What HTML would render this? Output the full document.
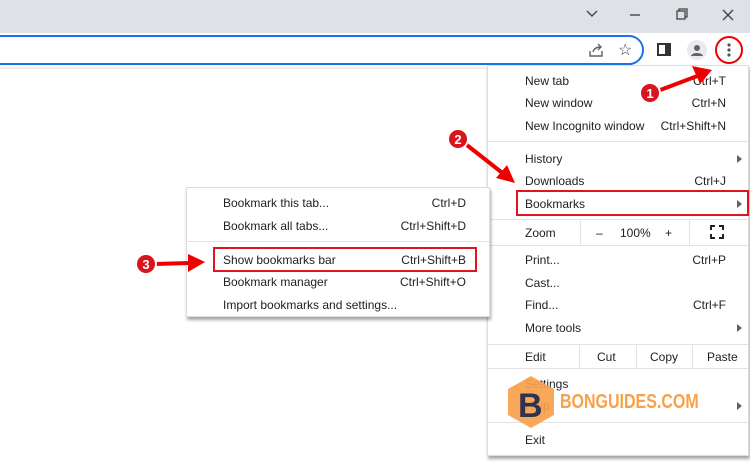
<!DOCTYPE html>
<html><head><style>
*{margin:0;padding:0;box-sizing:border-box}
body{width:750px;height:466px;position:relative;overflow:hidden;background:#fff;font-family:"Liberation Sans",sans-serif;font-size:12px;color:#202124}
.a{position:absolute;white-space:nowrap}
.r{position:absolute;white-space:nowrap;text-align:right}
.sep{position:absolute;height:1px;background:#e3e3e3}
.tri{position:absolute;width:0;height:0;border-top:4px solid transparent;border-bottom:4px solid transparent;border-left:5px solid #5f6368}
</style></head><body>
<div class="a" style="left:0;top:0;width:750px;height:33px;background:#dee1e6"></div>
<svg class="a" style="left:580px;top:6px" width="160" height="18" viewBox="0 0 160 18"><path d="M7 5l5 5 5-5" stroke="#444" stroke-width="1.4" fill="none"/><path d="M50 9h10" stroke="#444" stroke-width="1.4"/><rect x="97" y="5" width="8" height="8" stroke="#444" stroke-width="1.3" fill="none"/><path d="M99 5V3h8v8h-2" stroke="#444" stroke-width="1.3" fill="none"/><path d="M143 4l10 10M153 4l-10 10" stroke="#444" stroke-width="1.4"/></svg>
<div class="a" style="left:-20px;top:35px;width:664px;height:30px;border:2px solid #1a73e8;border-radius:15px;background:#fff"></div>
<div class="a" style="left:0;top:67px;width:487px;height:2px;background:#ececec"></div>
<svg class="a" style="left:587px;top:42px" width="20" height="16" viewBox="0 0 20 16"><path d="M3 9v5h12V9" stroke="#5f6368" stroke-width="1.4" fill="none"/><path d="M6 10c1-4 4-5 8-5M11 2l3 3-3 3" stroke="#5f6368" stroke-width="1.4" fill="none"/></svg>
<div class="a" style="left:618px;top:40px;font-size:16px;color:#444">☆</div>
<div class="a" style="left:657px;top:43px;width:14px;height:13px;border:2px solid #333;border-right:6px solid #333"></div>
<div class="a" style="left:687px;top:40px;width:20px;height:20px;border-radius:50%;background:#e8eaed"></div>
<svg class="a" style="left:687px;top:40px" width="20" height="20"><circle cx="10" cy="8" r="3" fill="#5f6368"/><path d="M4 16c1-4 11-4 12 0z" fill="#5f6368"/></svg>
<div class="a" style="left:715px;top:36px;width:28px;height:28px;border:2.5px solid #e00;border-radius:50%"></div>
<svg class="a" style="left:725px;top:41px" width="8" height="18"><circle cx="4" cy="4" r="1.6" fill="#555"/><circle cx="4" cy="9" r="1.6" fill="#555"/><circle cx="4" cy="14" r="1.6" fill="#555"/></svg>

<div class="a" style="left:487px;top:65px;width:262px;height:391px;background:#fff;border:1px solid #ddd;box-shadow:1px 3px 3px rgba(0,0,0,.35)"></div>
<div class="a" style="left:525px;top:74px">New tab</div><div class="r" style="right:24px;top:74px">Ctrl+T</div>
<div class="a" style="left:525px;top:96px">New window</div><div class="r" style="right:24px;top:96px">Ctrl+N</div>
<div class="a" style="left:525px;top:119px">New Incognito window</div><div class="r" style="right:24px;top:119px">Ctrl+Shift+N</div>
<div class="sep" style="left:488px;top:141px;width:260px"></div>
<div class="a" style="left:525px;top:152px">History</div><div class="tri" style="left:737px;top:155px"></div>
<div class="a" style="left:525px;top:174px">Downloads</div><div class="r" style="right:24px;top:174px">Ctrl+J</div>
<div class="a" style="left:516px;top:190px;width:233px;height:26px;border:2px solid #e0141e"></div>
<div class="a" style="left:525px;top:197px">Bookmarks</div><div class="tri" style="left:737px;top:200px"></div>
<div class="sep" style="left:488px;top:219px;width:260px"></div>
<div class="a" style="left:525px;top:226px">Zoom</div>
<div class="a" style="left:580px;top:220px;width:1px;height:25px;background:#e3e3e3"></div>
<div class="a" style="left:596px;top:226px">–</div><div class="a" style="left:620px;top:226px">100%</div><div class="a" style="left:665px;top:226px">+</div>
<div class="a" style="left:689px;top:220px;width:1px;height:25px;background:#e3e3e3"></div>
<svg class="a" style="left:710px;top:225px" width="14" height="14"><path d="M1 5V1h4M9 1h4v4M13 9v4H9M5 13H1V9" stroke="#222" stroke-width="2" fill="none"/></svg>
<div class="sep" style="left:488px;top:245px;width:260px"></div>
<div class="a" style="left:525px;top:253px">Print...</div><div class="r" style="right:24px;top:253px">Ctrl+P</div>
<div class="a" style="left:525px;top:276px">Cast...</div>
<div class="a" style="left:525px;top:298px">Find...</div><div class="r" style="right:24px;top:298px">Ctrl+F</div>
<div class="a" style="left:525px;top:321px">More tools</div><div class="tri" style="left:737px;top:324px"></div>
<div class="sep" style="left:488px;top:344px;width:260px"></div>
<div class="a" style="left:525px;top:350px">Edit</div>
<div class="a" style="left:579px;top:345px;width:1px;height:23px;background:#e3e3e3"></div>
<div class="a" style="left:597px;top:350px">Cut</div>
<div class="a" style="left:636px;top:345px;width:1px;height:23px;background:#e3e3e3"></div>
<div class="a" style="left:650px;top:350px">Copy</div>
<div class="a" style="left:692px;top:345px;width:1px;height:23px;background:#e3e3e3"></div>
<div class="a" style="left:707px;top:350px">Paste</div>
<div class="sep" style="left:488px;top:368px;width:260px"></div>
<div class="a" style="left:525px;top:377px">Settings</div>
<div class="a" style="left:525px;top:399px">Help</div><div class="tri" style="left:737px;top:402px"></div>
<div class="sep" style="left:488px;top:422px;width:260px"></div>
<div class="a" style="left:525px;top:433px">Exit</div>
<svg class="a" style="left:506px;top:374px" width="50" height="56"><polygon points="25,2 48,15 48,41 25,54 2,41 2,15" fill="#f7a14a" opacity=".92"/><text x="12" y="43" font-family="Liberation Sans" font-weight="bold" font-size="34" fill="#2d3350">B</text></svg>
<div class="a" style="left:560px;top:391px;font-size:20px;font-weight:bold;color:#f7a14a;transform:scaleX(0.8);transform-origin:left">BONGUIDES.COM</div>

<div class="a" style="left:186px;top:187px;width:304px;height:130px;background:#fff;border:1px solid #ddd;box-shadow:1px 3px 3px rgba(0,0,0,.35)"></div>
<div class="a" style="left:223px;top:196px">Bookmark this tab...</div><div class="r" style="left:380px;width:86px;top:196px">Ctrl+D</div>
<div class="a" style="left:223px;top:219px">Bookmark all tabs...</div><div class="r" style="left:380px;width:86px;top:219px">Ctrl+Shift+D</div>
<div class="sep" style="left:187px;top:241px;width:302px"></div>
<div class="a" style="left:213px;top:247px;width:264px;height:25px;border:2px solid #e0141e"></div>
<div class="a" style="left:223px;top:253px">Show bookmarks bar</div><div class="r" style="left:380px;width:86px;top:253px">Ctrl+Shift+B</div>
<div class="a" style="left:223px;top:275px">Bookmark manager</div><div class="r" style="left:380px;width:86px;top:275px">Ctrl+Shift+O</div>
<div class="a" style="left:223px;top:298px">Import bookmarks and settings...</div>

<svg class="a" style="left:0;top:0" width="750" height="466">
<path d="M655 92L700 75" stroke="#e00" stroke-width="4"/><polygon points="712,70 692,66 700,84" fill="#e00"/>
<path d="M463 142L505 175" stroke="#e00" stroke-width="4"/><polygon points="515,183 496,178 507,165" fill="#e00"/>
<path d="M155 264L190 263" stroke="#e00" stroke-width="4"/><polygon points="205,262 188,254 188,272" fill="#e00"/>
<circle cx="650" cy="93" r="10" fill="#d8141c" stroke="#fff" stroke-width="2"/><text x="650" y="98" text-anchor="middle" font-family="Liberation Sans" font-weight="bold" font-size="13" fill="#fff">1</text>
<circle cx="458" cy="139" r="10" fill="#d8141c" stroke="#fff" stroke-width="2"/><text x="458" y="144" text-anchor="middle" font-family="Liberation Sans" font-weight="bold" font-size="13" fill="#fff">2</text>
<circle cx="146" cy="264" r="10" fill="#d8141c" stroke="#fff" stroke-width="2"/><text x="146" y="269" text-anchor="middle" font-family="Liberation Sans" font-weight="bold" font-size="13" fill="#fff">3</text>
</svg>
</body></html>
